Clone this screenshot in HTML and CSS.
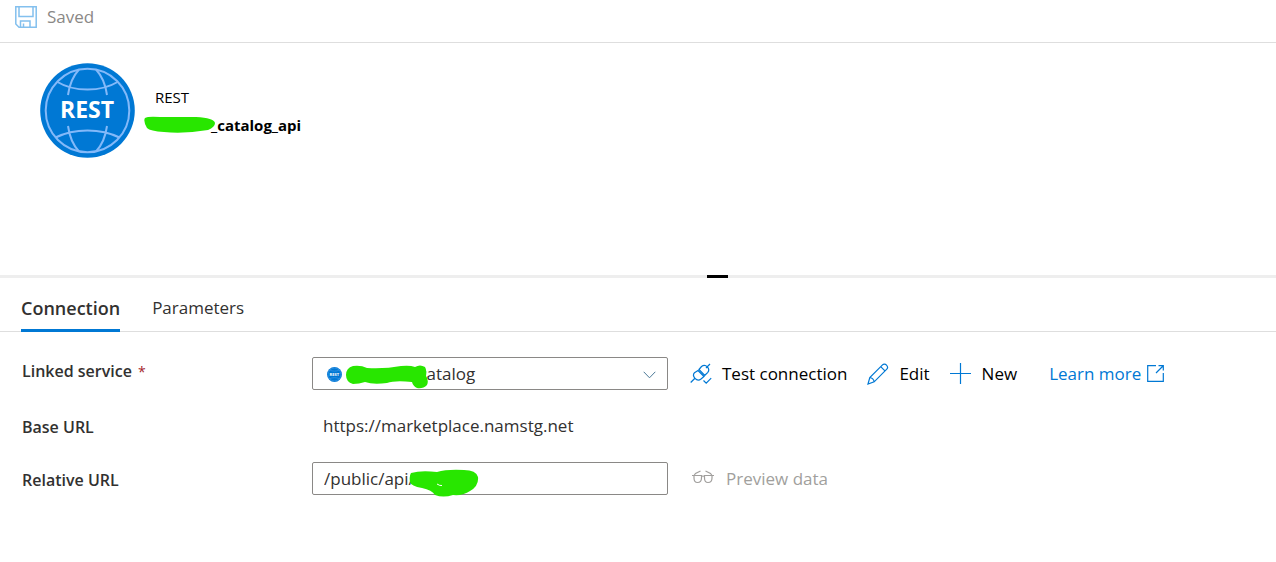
FILE: index.html
```html
<!DOCTYPE html>
<html lang="en">
<head>
<meta charset="UTF-8" />
<meta name="viewport" content="width=device-width, initial-scale=1.0" />
<title>REST dataset</title>
<link rel="stylesheet" href="styles.css">
</head>
<body>

<!-- toolbar -->
<header class="toolbar">
  <button class="save-btn" type="button" disabled>
    <svg class="save-icon" viewBox="0 0 22 22">
      <path d="M1 .8h20.2v20.4H4L.8 18V.8zM4 1v9.500h14V1M5.500 21v-6h9.500v6M8.500 21v-3.500"/>
    </svg>
    Saved
  </button>
</header>

<!-- dataset summary -->
<section class="summary">
  <svg class="rest-logo" viewBox="0 0 95 95">
    <circle class="disc" cx="47.500" cy="47.500" r="47.300"/>
    <g class="lines">
      <circle cx="47.500" cy="47.500" r="41.800"/>
      <path d="M17.500 19C34 29 61 29 77.500 19M39 6.500C33 13 29.500 21 28 32M56 6.500C62 13 65.500 21 67 32"/>
      <path d="M15.500 74.500C34 65 61 65 79.500 74.500M39 88.500C33 82 29.500 74 28 63M56 88.500C62 82 65.500 74 67 63"/>
    </g>
    <text x="47" y="55">REST</text>
  </svg>
  <div class="summary-text">
    <p class="type">REST</p>
    <h1 class="name">_catalog_api
      <svg class="mark mark-name" viewBox="0 0 72 18">
        <path d="M1 2Q4 0 16 1L52 1Q70 2 71 7Q71 11 64 14Q40 18 20 16Q6 15 3 12Q-1 5 1 2z"/>
      </svg>
    </h1>
  </div>
</section>

<div class="splitter"><span class="handle"></span></div>

<!-- tabs -->
<nav class="tabs">
  <button class="tab active" type="button">Connection</button>
  <button class="tab" type="button">Parameters</button>
</nav>

<form class="form">
  <div class="row">
    <label class="label label-top" for="service">Linked service <span class="required">*</span></label>
    <div class="field">
      <select id="service" class="control service">
        <option>_catalog</option>
      </select>
      <svg class="service-icon" viewBox="0 0 95 95">
        <circle class="disc" cx="47.500" cy="47.500" r="47.300"/>
        <g class="lines">
          <circle cx="47.500" cy="47.500" r="41"/>
          <path d="M17.500 19C34 29 61 29 77.500 19M15.500 75C34 65 61 65 79.500 75"/>
        </g>
        <text x="47" y="57">REST</text>
      </svg>
      <svg class="mark mark-service" viewBox="0 0 83 24">
        <path d="M1 10Q1 3 8 1Q16 0 22 3Q40 4 56 1Q65 0 70 2Q75-1 80 2Q82 5 81 11Q84 15 82 20Q78 24 72 23Q68 21 67 17Q50 15 42 18Q28 20 20 17Q14 19 8 19Q1 17 1 10z"/>
      </svg>
      <svg class="chevron" viewBox="0 0 13 8"><path d="M.7.8l5.800 6 5.800-6"/></svg>
    </div>
    <div class="actions">
      <button class="action" type="button">
        <svg class="icon" viewBox="0 0 22 22">
          <path d="M.7 19.500l4-4M16 5l4-4M8 7.500l6 6-3 2.500c-2 1.500-4.500 1-6-.6s-2-4-.5-5.700zM9 6.500l2.500-3c2-1.500 4.300-1.200 5.800.3s1.800 4 .3 5.800l-2.800 2.700zM13.500 17.500l2.700 2.700 5-5"/>
        </svg>
        Test connection
      </button>
      <button class="action" type="button">
        <svg class="icon" viewBox="0 0 22 22">
          <path d="M1 21l1.800-6.500L15.500 1.800c1-1 2.800-1 4 .3s1.300 3 .3 4L7.200 18.800zM2.800 14.500c2 .3 4 2.200 4.400 4.300M13.700 3.600l4.500 4.500"/>
        </svg>
        Edit
      </button>
      <button class="action" type="button">
        <svg class="icon" viewBox="0 0 22 22"><path d="M10.500 0v21M0 10.500h21"/></svg>
        New
      </button>
      <a class="learn" href="#">Learn more
        <svg class="external" viewBox="0 0 17 17"><path d="M9 .7H.7v15.600h15.600V8M11.500.7h4.800v4.800M16 1L9 8"/></svg>
      </a>
    </div>
  </div>

  <div class="row">
    <span class="label">Base URL</span>
    <span class="value">https://marketplace.namstg.net</span>
  </div>

  <div class="row">
    <label class="label" for="relative">Relative URL</label>
    <div class="field">
      <input id="relative" class="control" type="text" value="/public/api/">
      <svg class="mark mark-relative" viewBox="0 0 70 28">
        <path d="M2 4Q12 1 28 3Q38 0 55 1Q67 1 69 8Q70 17 61 22Q54 27 44 26Q34 29 26 26Q23 21 13 19Q2 17 1 13Q0 7 2 4z"/>
        <path class="gap" d="M28 15q3 2 5 1.500"/>
      </svg>
    </div>
    <div class="actions">
      <button class="action" type="button" disabled>
        <svg class="icon" viewBox="0 0 22 22">
          <path d="M0 7.500h3M19 7.500h3M2 7.500l1.500-2 5-2.500M20 7.500l-1.500-2-5-2.500M9.500 8.500q1.500-1 3 0M2 7.500h7.500v2.500c0 2.500-1.500 4.500-4 4.500S2 12.500 2 10zM12.500 7.500H20V10c0 2.500-1.500 4.500-4 4.500s-3.500-2-3.500-4.500z"/>
        </svg>
        Preview data
      </button>
    </div>
  </div>
</form>

</body>
</html>
```

FILE: styles.css
```css
:root{
  --blue:     #0078d4;
  --line:     #dedede;
  --txt:      #323130;
  --disabled: #a19f9d;
  --mark:     #28e600;
  font-family:"Open Sans", "Segoe UI", sans-serif;
}

*{box-sizing:border-box;margin:0;padding:0}

body{background:#fff;color:var(--txt);font-size:17px;line-height:24px}

button,input,select{font:inherit;color:inherit;background:none;border:none}
svg{fill:none;flex:none}

/* toolbar */
.toolbar{
  height:43px;
  padding:0 15px 8px;
  display:flex;
  align-items:center;
  border-bottom:1px solid var(--line);
}
.save-btn{display:flex;align-items:center;gap:10px;color:#8a8886}
.save-icon{width:22px;height:22px;stroke:#83c0ee;stroke-width:1.5}

/* summary */
.summary{
  min-height:232px;
  padding:20px 40px;
  display:flex;
  align-items:flex-start;
  gap:20px;
}
.rest-logo{width:95px;height:95px}
.disc{fill:var(--blue)}
.lines{stroke:#83b9f9;stroke-width:2}
.rest-logo text,
.service-icon text{fill:#fff;font-size:23px;font-weight:700;text-anchor:middle}
.service-icon text{font-size:26px}
.summary-text{padding-top:20px;color:#000}
.type{font-size:15px;line-height:28px}
.name{
  position:relative;
  padding-left:56px;
  font-size:15px;
  line-height:28px;
}

/* green marker strokes */
.mark{position:absolute;fill:var(--mark)}
.mark .gap{fill:none;stroke:#fff;stroke-width:1}
.mark-name{left:-11px;top:5px;width:72px}
.mark-service{left:33px;top:8px;width:83px}
.mark-relative{left:97px;top:7px;width:70px}

.splitter{height:3px;background:#eee;display:flex;justify-content:center}
.handle{width:21px;background:#000;margin-left:159px}

/* tabs */
.tabs{
  display:flex;
  gap:32px;
  padding:0 21px;
  border-bottom:1px solid var(--line);
}
.tab{height:54px;padding-top:8px;border-bottom:3px solid transparent;margin-bottom:-1px}
.tab.active{font-size:18px;font-weight:600;border-bottom-color:var(--blue)}

/* form */
.form{
  display:flex;
  flex-direction:column;
  gap:19px;
  padding:25px 22px;
}
.row{display:grid;grid-template-columns:290px 356px 1fr;align-items:center}
.label{padding-top:2px;font-size:16px;font-weight:600}
.label-top{padding:0 0 4px}
.required{margin-left:2px;color:#a4262c;font-size:14px;font-weight:400}
.field{position:relative}
.control{
  display:block;
  width:100%;
  height:33px;
  padding:0 11px;
  border:1px solid #8a8886;
  border-radius:2px;
}
.service{appearance:none;padding-left:98px}
.service-icon{position:absolute;left:15px;top:10px;width:15px}
.chevron{position:absolute;right:12px;top:14px;width:13px;stroke:#4a7896;pointer-events:none}
.value{padding-left:11px;line-height:34px}

/* row actions */
.actions{display:flex;align-items:center;gap:20px;padding-left:22px;white-space:nowrap}
.action{display:flex;align-items:center;gap:10px;color:#000}
.icon{width:22px;height:22px;stroke:var(--blue);stroke-width:1.2}
.action:disabled{color:var(--disabled);gap:12px;padding-left:2px}
.action:disabled .icon{stroke:var(--disabled)}
.learn{display:flex;align-items:center;gap:6px;padding-left:12px;color:var(--blue);text-decoration:none}
.external{width:17px;height:17px;stroke:var(--blue);stroke-width:1.2}
```
